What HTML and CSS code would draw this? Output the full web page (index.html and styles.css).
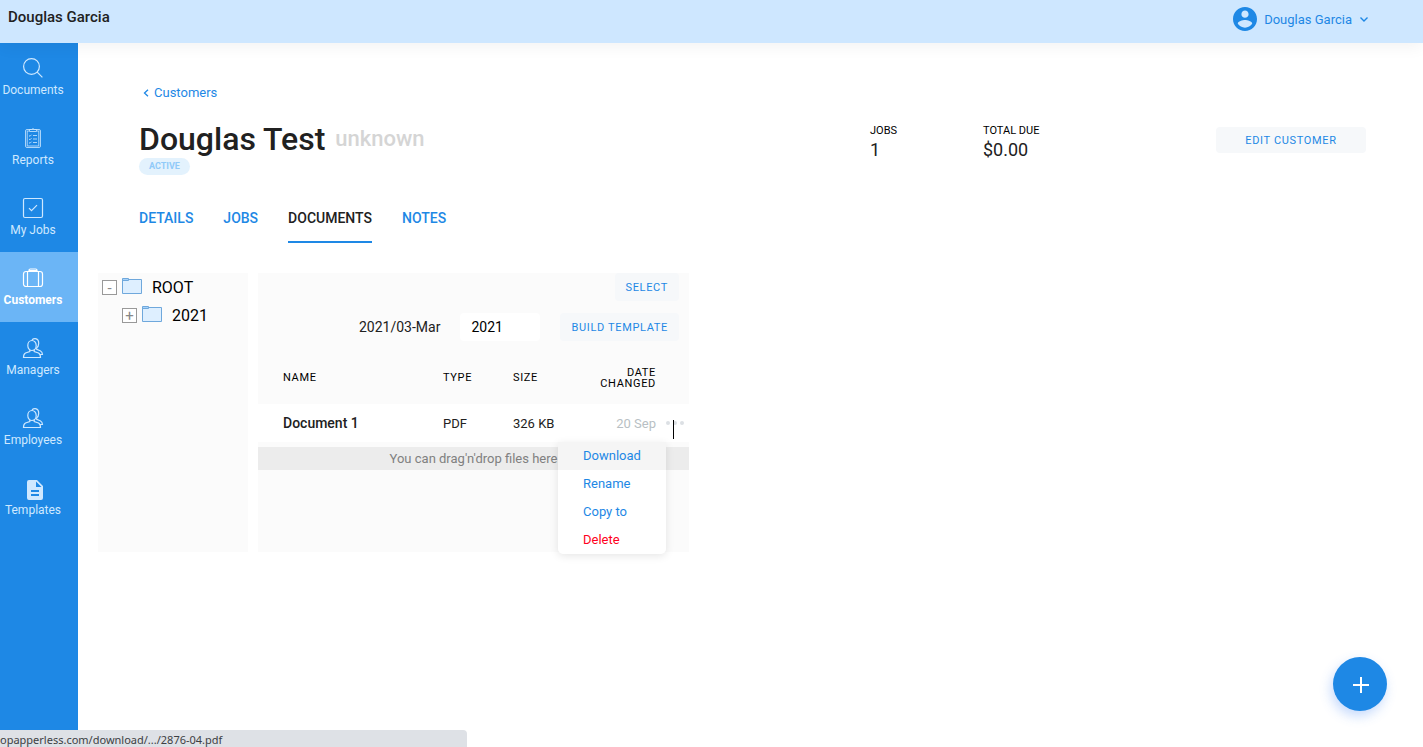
FILE: index.html
```
<!DOCTYPE html>
<html lang="en">

<head>
    <meta charset="UTF-8">
    <meta name="viewport" content="width=device-width, initial-scale=1.0">
    <title>Douglas Test - Documents</title>
    <link rel="stylesheet" href="styles.css">
</head>

<body>
    <header class="topbar">
        <div class="company">Douglas Garcia</div>
        <button type="button" class="user">
            <svg class="avatar" viewBox="2 2 20 20"><path fill="currentColor" d="M12 2C6.48 2 2 6.48 2 12s4.48 10 10 10 10-4.48 10-10S17.52 2 12 2zm0 3c1.66 0 3 1.34 3 3s-1.34 3-3 3-3-1.34-3-3 1.34-3 3-3zm0 14.2c-2.5 0-4.71-1.28-6-3.22.03-1.99 4-3.08 6-3.08 1.99 0 5.97 1.09 6 3.08-1.29 1.94-3.5 3.22-6 3.22z"/></svg>
            <span>Douglas Garcia</span>
            <svg class="chevron" viewBox="0 0 10 8"><path d="M1.500 2.500L5 6l3.500-3.500"/></svg>
        </button>
    </header>

    <div class="layout">
        <nav class="sidebar">
            <a href="#" class="nav-item">
                <svg class="nav-icon" viewBox="0 0 20 20"><circle cx="8.5" cy="8.5" r="7.9"/><path d="M14.2 14.2l5.2 5.2"/></svg>
                Documents
            </a>
            <a href="#" class="nav-item">
                <svg class="nav-icon thin" viewBox="0 0 20 20"><rect x="2.5" y="1.5" width="15" height="18" rx="1.5"/><path d="M6 3H4.2v15h11.600V3H14M6.500 3.500V1.500h2q1.500-1.600 3 0h2v2zM6 7.500l1 .8 1.500-1.600M10 7.500h4M6 11l1 .8 1.500-1.600M10 11h4M6 14.500l1 .8 1.500-1.600M10 14.500h4"/></svg>
                Reports
            </a>
            <a href="#" class="nav-item">
                <svg class="nav-icon" viewBox="0 0 20 20"><rect x=".5" y=".5" width="19" height="19" rx="1.500"/><path d="M6 10.200l2.500 2.500 5.500-5.500"/></svg>
                My Jobs
            </a>
            <a href="#" class="nav-item active">
                <svg class="nav-icon" viewBox="0 0 20 20"><rect x=".5" y="3.500" width="19" height="15" rx="2.500"/><path d="M4.500 3.500v15M15.500 3.500v15M6 3.500V2.300Q6 1 7.300 1h5.400Q14 1 14 2.300v1.200M6.500 2.500h7"/></svg>
                Customers
            </a>
            <a href="#" class="nav-item">
                <svg class="nav-icon" viewBox="0 0 20 20"><ellipse cx="9" cy="7.500" rx="4.200" ry="5"/><path d="M6.800 12v1.500L2.500 15Q.5 16 .5 19.500h17q0-3.500-2-4.500l-4.300-1.500V12M9 1.800Q10.500.5 12.200.6q3.800.6 3.500 5-.2 3-2 4.200v1.500l3.500 1.400q2.200 1 2.300 3.800h-2"/></svg>
                Managers
            </a>
            <a href="#" class="nav-item">
                <svg class="nav-icon" viewBox="0 0 20 20"><ellipse cx="9" cy="7.500" rx="4.200" ry="5"/><path d="M6.800 12v1.500L2.500 15Q.5 16 .5 19.500h17q0-3.500-2-4.500l-4.300-1.500V12M9 1.800Q10.500.5 12.200.6q3.800.6 3.500 5-.2 3-2 4.200v1.500l3.500 1.400q2.200 1 2.300 3.800h-2"/></svg>
                Employees
            </a>
            <a href="#" class="nav-item">
                <svg class="nav-icon solid" viewBox="0 -2 20 20"><path d="M6 0h8l6 6v12q0 2-2 2H6q-2 0-2-2V2q0-2 2-2zm7 1.500V7h5.500zM8 10v2h8v-2zm0 4v2h8v-2z"/></svg>
                Templates
            </a>
        </nav>

        <main class="main">
            <a href="#" class="back">
                <svg class="back-arrow" viewBox="0 0 6 8"><path d="M5 .8L1.500 4 5 7.200"/></svg>
                Customers
            </a>

            <section class="customer">
                <div class="customer-title">
                    <h1>Douglas Test <small>unknown</small></h1>
                    <span class="badge">ACTIVE</span>
                </div>
                <div class="stat">
                    <div class="stat-label">JOBS</div>
                    <div class="stat-value">1</div>
                </div>
                <div class="stat stat-total">
                    <div class="stat-label">TOTAL DUE</div>
                    <div class="stat-value">$0.00</div>
                </div>
                <button type="button" class="btn btn-edit">EDIT CUSTOMER</button>
            </section>

            <nav class="tabs">
                <a href="#">DETAILS</a>
                <a href="#">JOBS</a>
                <a href="#" class="active">DOCUMENTS</a>
                <a href="#">NOTES</a>
            </nav>

            <div class="panels">
                <div class="tree">
                    <div class="tree-row">
                        <button type="button" class="toggle" aria-label="Collapse ROOT">-</button>
                        <svg class="folder" viewBox="0 0 20 16"><path d="M.5 1.500h19v14H.5z"/><path class="folder-tab" d="M.5.5h6v2h-6z"/></svg>
                        <span>ROOT</span>
                    </div>
                    <div class="tree-row child">
                        <button type="button" class="toggle" aria-label="Expand 2021">+</button>
                        <svg class="folder" viewBox="0 0 20 16"><path d="M.5 1.500h19v14H.5z"/><path class="folder-tab" d="M.5.5h6v2h-6z"/></svg>
                        <span>2021</span>
                    </div>
                </div>

                <div class="files">
                    <div class="toolbar">
                        <button type="button" class="btn">SELECT</button>
                    </div>
                    <div class="toolbar template-bar">
                        <label for="folder">2021/03-Mar</label>
                        <input type="text" id="folder" value="2021">
                        <button type="button" class="btn">BUILD TEMPLATE</button>
                    </div>

                    <table class="file-table">
                        <thead>
                            <tr>
                                <th class="col-name">NAME</th>
                                <th class="col-type">TYPE</th>
                                <th class="col-size">SIZE</th>
                                <th class="col-date">DATE CHANGED</th>
                                <th class="col-menu"></th>
                            </tr>
                        </thead>
                        <tbody>
                            <tr>
                                <td class="col-name">Document 1</td>
                                <td>PDF</td>
                                <td>326 KB</td>
                                <td class="col-date">20 Sep</td>
                                <td class="col-menu">
                                    <div class="menu-wrap">
                                        <button type="button" class="dots" aria-label="File actions"><i></i><i></i><i></i></button>
                                        <span class="caret"></span>
                                        <div class="menu">
                                            <a href="#" class="hover">Download</a>
                                            <a href="#">Rename</a>
                                            <a href="#">Copy to</a>
                                            <a href="#" class="danger">Delete</a>
                                        </div>
                                    </div>
                                </td>
                            </tr>
                        </tbody>
                    </table>
                    <div class="dropzone">You can drag'n'drop files here</div>
                </div>
            </div>
        </main>
    </div>

    <button type="button" class="fab" aria-label="Add">
        <svg viewBox="0 0 16 16"><path d="M8 0v16M0 8h16"/></svg>
    </button>
    <div class="status">opapperless.com/download/.../2876-04.pdf</div>
</body>

</html>
```
FILE: styles.css
```
* {
    box-sizing: border-box;
}

body {
    margin: 0;
    min-height: 100vh;
    display: flex;
    flex-direction: column;
    font-family: Roboto, Arial, sans-serif;
    font-size: 13px;
    color: #212121;
    background-color: #fff;
}

a {
    color: #1e88e5;
    text-decoration: none;
}

button,
input {
    font-family: inherit;
    border: 0;
    margin: 0;
    padding: 0;
}

button {
    cursor: pointer;
}

svg {
    display: block;
    flex: none;
    fill: none;
    stroke: currentColor;
}

/* top bar */
.topbar {
    display: flex;
    justify-content: space-between;
    height: 43px;
    padding: 7px 54px 0 8px;
    background-color: #cee7ff;
    box-shadow: 0 4px 16px rgba(0, 0, 0, 0.05);
    z-index: 1;
}

.company {
    font-size: 15px;
    line-height: 20px;
    font-weight: 500;
}

.user {
    display: flex;
    align-items: center;
    height: 24px;
    gap: 7px;
    font-size: 13px;
    color: #1e88e5;
    background: none;
}

.avatar {
    width: 24px;
    height: 24px;
    stroke: none;
}

.chevron {
    width: 10px;
    height: 8px;
    stroke-width: 1.4;
}

.layout {
    flex: 1;
    display: flex;
    margin-top: -1px;
}

/* sidebar */
.sidebar {
    width: 78px;
    flex: none;
    background-color: #1e88e5;
}

.nav-item {
    display: flex;
    flex-direction: column;
    align-items: center;
    gap: 4px;
    height: 70px;
    padding: 16px 12px 0 0;
    font-size: 12px;
    line-height: 16px;
    color: #cfe8ff;
}

.nav-item.active {
    background-color: #6bb5f6;
    color: #fff;
    font-weight: 700;
}

.nav-icon {
    width: 20px;
    height: 20px;
    stroke-width: 1.2;
    overflow: visible;
}

.nav-icon.thin {
    stroke-width: 0.8;
}

.nav-icon.solid {
    fill: currentColor;
    fill-rule: evenodd;
    stroke: none;
}

/* customer header */
.main {
    flex: 1;
    min-width: 0;
    padding: 42px 57px 20px 20px;
}

.back {
    display: inline-flex;
    align-items: center;
    gap: 5px;
    margin-left: 45px;
    line-height: 18px;
}

.back-arrow {
    width: 6px;
    height: 8px;
    stroke-width: 1.3;
}

.customer {
    display: flex;
    align-items: flex-start;
    margin: 18px 0 0 41px;
}

.customer-title {
    flex: 1;
}

h1 {
    display: flex;
    align-items: center;
    gap: 10px;
    margin: 0;
    font-size: 32px;
    line-height: 38px;
    font-weight: 500;
}

h1 small {
    font-size: 22px;
    color: #d5d5d5;
}

.badge {
    display: block;
    width: 51px;
    border-radius: 9px;
    font-size: 9px;
    line-height: 17px;
    font-weight: 700;
    text-align: center;
    color: #90caf9;
    background-color: #e3f2fd;
}

.stat {
    width: 113px;
    padding-top: 4px;
}

.stat-total {
    width: 233px;
}

.stat-label {
    font-size: 11px;
    line-height: 14px;
    color: #000;
}

.stat-value {
    font-size: 18px;
    line-height: 24px;
}

.btn {
    height: 28px;
    padding: 0 11px;
    border-radius: 4px;
    font-size: 11px;
    letter-spacing: 0.06em;
    color: #1e88e5;
    background-color: #f6f8fa;
}

.btn-edit {
    width: 150px;
    height: 26px;
    margin-top: 7px;
}

.tabs {
    display: flex;
    gap: 30px;
    margin: 33px 0 30px 41px;
    font-size: 14px;
    font-weight: 500;
    line-height: 20px;
}

.tabs a {
    padding-bottom: 13px;
    border-bottom: 2px solid transparent;
}

.tabs a.active {
    color: #212121;
    border-bottom-color: #1e88e5;
}

/* folder tree and files */
.panels {
    display: grid;
    grid-template-columns: 150px minmax(0, 431px);
    gap: 10px;
    min-height: 279px;
}

.tree,
.files {
    background-color: #fbfbfb;
}

.tree-row {
    display: flex;
    align-items: center;
    height: 28px;
    padding-left: 4px;
    font-size: 16px;
    color: #000;
}

.tree-row.child {
    padding-left: 24px;
}

.toggle {
    width: 15px;
    height: 15px;
    border: 1px solid #999;
    font-size: 15px;
    line-height: 14px;
    color: #888;
    background-color: #fff;
}

.folder {
    width: 20px;
    height: 16px;
    margin: 0 10px 2px 5px;
    fill: #deefff;
    stroke: #6fa8dc;
}

.folder-tab {
    fill: #a9d3fa;
}

.toolbar {
    display: flex;
    justify-content: flex-end;
    align-items: center;
    gap: 20px;
    padding-right: 10px;
}

.template-bar {
    margin-top: 12px;
    font-size: 14px;
}

.template-bar input {
    width: 80px;
    height: 28px;
    padding: 0 11px;
    border-radius: 4px;
    font-size: 14px;
    background-color: #fff;
}

.file-table {
    width: 100%;
    margin-top: 10px;
    table-layout: fixed;
    border-collapse: collapse;
}

.file-table th {
    height: 53px;
    padding: 0;
    font-size: 11px;
    line-height: 11px;
    font-weight: 400;
    letter-spacing: 0.06em;
    text-align: left;
    color: #000;
}

.file-table td {
    height: 38px;
    padding: 0;
    background-color: #fff;
}

.file-table .col-name {
    width: 185px;
    padding-left: 25px;
}

.file-table td.col-name {
    font-size: 14px;
    font-weight: 500;
}

.col-type {
    width: 70px;
}

.col-size {
    width: 73px;
}

.file-table .col-date {
    text-align: right;
}

.file-table td.col-date {
    color: #b8bfc4;
}

.col-menu {
    width: 33px;
}

.menu-wrap {
    position: relative;
    display: flex;
    align-items: center;
    height: 38px;
    padding-left: 10px;
}

.dots {
    display: flex;
    gap: 3px;
    background: none;
}

.dots i {
    width: 4px;
    height: 4px;
    border-radius: 50%;
    background-color: #dce0e4;
}

/* text cursor over the dots */
.caret {
    position: absolute;
    left: 17px;
    top: 16px;
    width: 1px;
    height: 19px;
    background-color: #000;
}

.menu {
    position: absolute;
    top: 38px;
    right: 23px;
    width: 108px;
    border-radius: 0 0 5px 5px;
    background-color: #fff;
    box-shadow: 0 2px 8px rgba(0, 0, 0, 0.1);
    overflow: hidden;
}

.menu a {
    display: block;
    padding-left: 25px;
    line-height: 28px;
}

.menu a.hover {
    background-color: #f5f5f5;
}

.menu a.danger {
    color: #ff0020;
}

.dropzone {
    margin-top: 5px;
    line-height: 23px;
    text-align: center;
    color: #808080;
    background-color: #ececec;
}

/* floating elements */
.fab {
    position: fixed;
    right: 36px;
    bottom: 36px;
    display: flex;
    align-items: center;
    justify-content: center;
    width: 54px;
    height: 54px;
    padding: 2px 0 0 2px;
    border-radius: 50%;
    color: #fff;
    background-color: #1e88e5;
    box-shadow: -2px 5px 12px rgba(66, 133, 244, 0.3);
}

.fab svg {
    width: 16px;
    height: 16px;
    stroke-width: 2;
}

.status {
    position: fixed;
    left: 0;
    bottom: 0;
    width: 467px;
    padding-top: 3px;
    border-radius: 0 4px 0 0;
    font-family: "Noto Sans", "Open Sans", sans-serif;
    font-size: 11px;
    line-height: 14px;
    color: #3c4043;
    background-color: #dee1e6;
    z-index: 2;
}
```
